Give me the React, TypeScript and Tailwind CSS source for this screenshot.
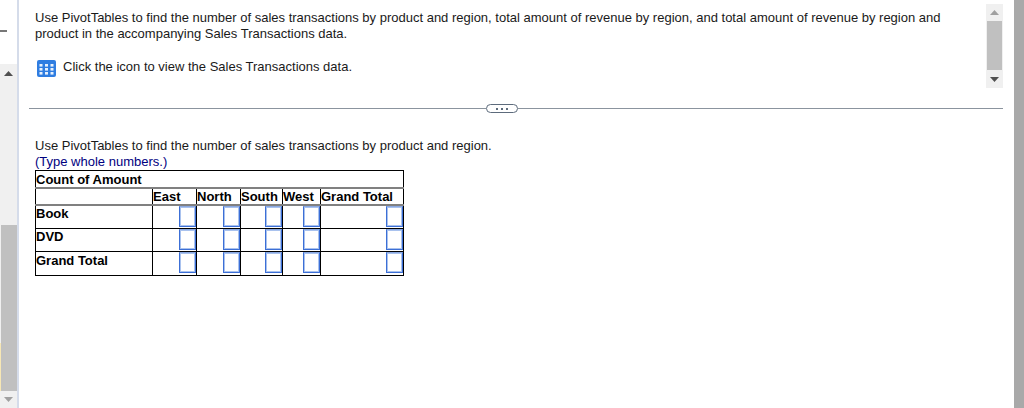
const cols = ["East", "North", "South", "West", "Grand Total"];
const widths = ["w-[44px]", "w-[44px]", "w-[42px]", "w-[38px]", "w-[83px]"];

function Triangle({ down, color }: { down?: boolean; color: string }) {
  return (
    <svg width="9" height="5" viewBox="0 0 9 5" className="block">
      <polygon points={down ? "0,0 9,0 4.5,5" : "4.5,0 9,5 0,5"} fill={color} />
    </svg>
  );
}

function Row({ label, h, labelClass }: { label: string; h: string; labelClass?: string }) {
  return (
    <tr className={h}>
      <td className={`border border-black p-0 align-top font-bold leading-[15px] ${labelClass ?? ""}`}>{label}</td>
      {cols.map((c) => (
        <td key={c} className="border border-black p-0 align-top">
          <div className="flex justify-end">
            <div className="h-[21px] w-[17px] border border-[#3c6fd6] border-t-[#8aa8e0] bg-white shadow-[inset_0_0_0_1px_#a9c2ee]" />
          </div>
        </td>
      ))}
    </tr>
  );
}

export default function App() {
  const cells = [
    [2.5, 4.5],
    [8, 4.5],
    [13.5, 4.5],
  ];
  return (
    <div className="flex h-[408px] w-[1024px] overflow-hidden bg-white font-['Liberation_Sans',sans-serif] text-[13px] text-[#1a1a1a]">
      <div className="flex h-full w-[19px] flex-none flex-col border-r-2 border-[#d5dcea]">
        <div className="h-[64px] flex-none pt-[30px]">
          <div className="h-[2px] w-[7px] bg-[#777777]" />
        </div>
        <div className="flex flex-1 flex-col bg-[#f0f0f0]">
          <div className="flex h-[161px] flex-none justify-center pt-[7px]">
            <Triangle color="#505050" />
          </div>
          <div className="flex h-[166px] flex-none">
            <div className="flex w-px flex-none flex-col">
              <div className="flex-1" />
              <div className="h-[48px] flex-none bg-[#f7e7b5]" />
            </div>
            <div className="h-full w-[16px] flex-none bg-[#c0c0c0]" />
          </div>
          <div className="flex flex-1 justify-center pt-[6px]">
            <Triangle down color="#a0a0a0" />
          </div>
        </div>
      </div>

      <div className="flex min-w-0 flex-1 flex-col">
        <div className="flex h-[91px] flex-none">
          <div className="w-[968px] flex-none pl-[16px] pt-[10px]">
            <p className="leading-[16px]">
              Use PivotTables to find the number of sales transactions by product and region, total amount of revenue by region, and total amount of revenue by region and product in the accompanying Sales Transactions data.
            </p>
            <div className="mt-[17px] flex items-start gap-[7px]">
              <svg width="19" height="17" viewBox="0 0 19 17" className="ml-[2px] mt-[1px] flex-none">
                <rect x="0" y="0" width="19" height="17" rx="2" fill="#2f7de1" />
                {[4, 8, 12].flatMap((y) =>
                  cells.map(([x]) => <rect key={`${x}-${y}`} x={x} y={y} width="3" height="2.6" fill="#e8f1fc" />)
                )}
              </svg>
              <span className="leading-[16px]">Click the icon to view the Sales Transactions data.</span>
            </div>
          </div>
          <div className="ml-[-1px] mt-[4px] flex h-[84px] w-[17px] flex-none flex-col bg-[#f0f0f0]">
            <div className="flex h-[17px] flex-none items-center justify-center">
              <Triangle color="#a0a0a0" />
            </div>
            <div className="mx-px h-[49px] flex-none bg-[#c0c0c0]" />
            <div className="flex flex-1 items-center justify-center">
              <Triangle down color="#505050" />
            </div>
          </div>
        </div>

        <div className="ml-[10px] flex h-[36px] w-[974px] flex-none items-center pb-[1px]">
          <div className="h-px w-[457px] flex-none bg-[#8b949e]" />
          <div className="flex h-[9px] w-[32px] flex-none items-center justify-center gap-[3px] rounded-full border border-[#5d6b7c] bg-white">
            <span className="h-[2px] w-[2px] bg-[#5d6b7c]" />
            <span className="h-[2px] w-[2px] bg-[#5d6b7c]" />
            <span className="h-[2px] w-[2px] bg-[#5d6b7c]" />
          </div>
          <div className="h-px flex-1 bg-[#8b949e]" />
        </div>

        <div className="pl-[16px] pt-[11px]">
          <p className="leading-[16px]">Use PivotTables to find the number of sales transactions by product and region.</p>
          <p className="leading-[16px] text-[#000080]">(Type whole numbers.)</p>
          <table className="w-[368px] table-fixed border-collapse text-black">
            <colgroup>
              <col className="w-[117px]" />
              {widths.map((w, i) => (
                <col key={i} className={w} />
              ))}
            </colgroup>
            <tbody>
              <tr className="h-[17px]">
                <td colSpan={6} className="border border-black border-b-2 border-b-[#808080] p-0 pt-px align-top font-bold leading-[15px]">
                  Count of Amount
                </td>
              </tr>
              <tr className="h-[17px]">
                <td className="border-x border-black border-b-2 border-b-[#808080] p-0" />
                {cols.map((c) => (
                  <td key={c} className="border-x border-black border-b-2 border-b-[#808080] p-0 align-top font-bold leading-[15px]">
                    {c}
                  </td>
                ))}
              </tr>
              <Row label="Book" h="h-[23px]" />
              <Row label="DVD" h="h-[23px]" />
              <Row label="Grand Total" h="h-[24px]" labelClass="pt-px" />
            </tbody>
          </table>
        </div>
      </div>

      <div className="ml-auto h-full w-[10px] flex-none bg-[#a9a9a9]" />
    </div>
  );
}
